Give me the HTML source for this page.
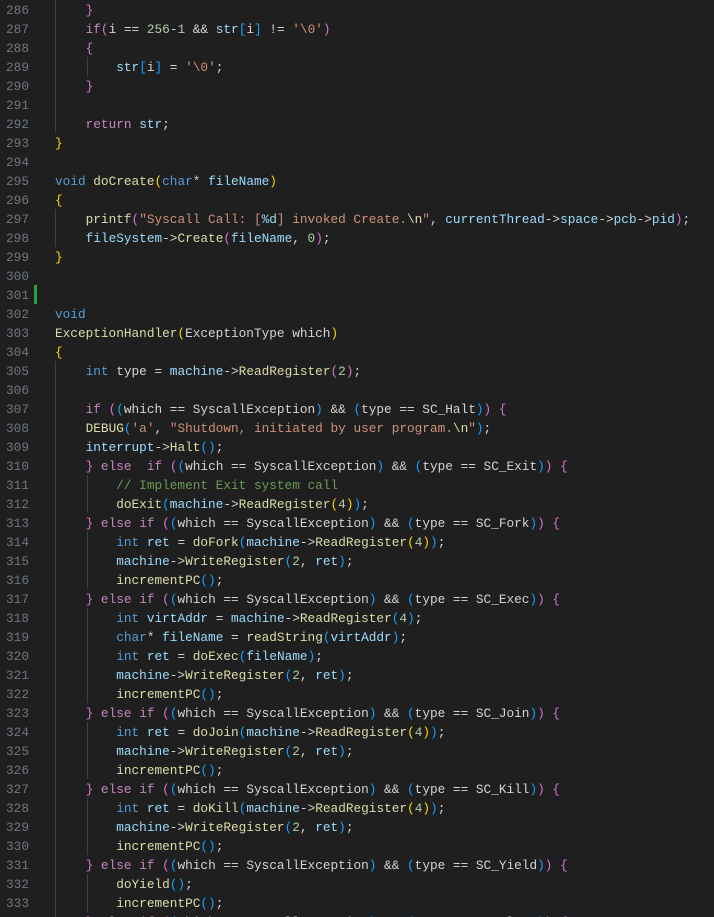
<!DOCTYPE html>
<html><head><meta charset="utf-8"><style>
html,body{margin:0;padding:0;background:#1f1f1f;width:714px;height:917px;overflow:hidden}
#w{position:relative;width:714px;height:917px;font-family:"Liberation Mono",monospace;font-size:12.75px;color:#d4d4d4}
.l{position:absolute;left:0;height:19px;line-height:19px;white-space:pre;width:714px}
.n{position:absolute;left:0;width:29px;text-align:right;color:#6e7681}
.c{position:absolute;left:55px}
.g{position:absolute;width:1px;height:19px;background:#404040}
.k{color:#c586c0}.t{color:#569cd6}.f{color:#dcdcaa}.v{color:#9cdcfe}.s{color:#ce9178}.u{color:#b5cea8}.m{color:#6a9955}
.y{color:#ffd700}.p{color:#da70d6}.b{color:#179fff}
</style></head><body><div id="w">
<div class="l" style="top:0.5px"><span class="n">286</span><span class="c">    <span class="p">}</span></span></div>
<div class="l" style="top:19.5px"><span class="n">287</span><span class="c">    <span class="k">if</span><span class="p">(</span>i == <span class="u">256</span>-<span class="u">1</span> &amp;&amp; <span class="v">str</span><span class="b">[</span>i<span class="b">]</span> != <span class="s">'\0'</span><span class="p">)</span></span></div>
<div class="l" style="top:38.5px"><span class="n">288</span><span class="c">    <span class="p">{</span></span></div>
<div class="l" style="top:57.5px"><span class="n">289</span><span class="c">        <span class="v">str</span><span class="b">[</span>i<span class="b">]</span> = <span class="s">'\0'</span>;</span></div>
<div class="l" style="top:76.5px"><span class="n">290</span><span class="c">    <span class="p">}</span></span></div>
<div class="l" style="top:95.5px"><span class="n">291</span></div>
<div class="l" style="top:114.5px"><span class="n">292</span><span class="c">    <span class="k">return</span> <span class="v">str</span>;</span></div>
<div class="l" style="top:133.5px"><span class="n">293</span><span class="c"><span class="y">}</span></span></div>
<div class="l" style="top:152.5px"><span class="n">294</span></div>
<div class="l" style="top:171.5px"><span class="n">295</span><span class="c"><span class="t">void</span> <span class="f">doCreate</span><span class="y">(</span><span class="t">char</span>* <span class="v">fileName</span><span class="y">)</span></span></div>
<div class="l" style="top:190.5px"><span class="n">296</span><span class="c"><span class="y">{</span></span></div>
<div class="l" style="top:209.5px"><span class="n">297</span><span class="c">    <span class="f">printf</span><span class="p">(</span><span class="s">"Syscall Call: [</span><span class="v">%d</span><span class="s">] invoked Create.</span><span class="f">\n</span><span class="s">"</span>, <span class="v">currentThread</span>-&gt;<span class="v">space</span>-&gt;<span class="v">pcb</span>-&gt;<span class="v">pid</span><span class="p">)</span>;</span></div>
<div class="l" style="top:228.5px"><span class="n">298</span><span class="c">    <span class="v">fileSystem</span>-&gt;<span class="f">Create</span><span class="p">(</span><span class="v">fileName</span>, <span class="u">0</span><span class="p">)</span>;</span></div>
<div class="l" style="top:247.5px"><span class="n">299</span><span class="c"><span class="y">}</span></span></div>
<div class="l" style="top:266.5px"><span class="n">300</span></div>
<div class="l" style="top:285.5px"><span class="n">301</span></div>
<div style="position:absolute;left:34px;top:285px;width:3px;height:19px;background:#2ea043"></div>
<div class="l" style="top:304.5px"><span class="n">302</span><span class="c"><span class="t">void</span></span></div>
<div class="l" style="top:323.5px"><span class="n">303</span><span class="c"><span class="f">ExceptionHandler</span><span class="y">(</span>ExceptionType which<span class="y">)</span></span></div>
<div class="l" style="top:342.5px"><span class="n">304</span><span class="c"><span class="y">{</span></span></div>
<div class="l" style="top:361.5px"><span class="n">305</span><span class="c">    <span class="t">int</span> type = <span class="v">machine</span>-&gt;<span class="f">ReadRegister</span><span class="p">(</span><span class="u">2</span><span class="p">)</span>;</span></div>
<div class="l" style="top:380.5px"><span class="n">306</span></div>
<div class="l" style="top:399.5px"><span class="n">307</span><span class="c">    <span class="k">if</span> <span class="p">(</span><span class="b">(</span>which == SyscallException<span class="b">)</span> &amp;&amp; <span class="b">(</span>type == SC_Halt<span class="b">)</span><span class="p">)</span> <span class="p">{</span></span></div>
<div class="l" style="top:418.5px"><span class="n">308</span><span class="c">    <span class="f">DEBUG</span><span class="b">(</span><span class="s">'a'</span>, <span class="s">"Shutdown, initiated by user program.</span><span class="f">\n</span><span class="s">"</span><span class="b">)</span>;</span></div>
<div class="l" style="top:437.5px"><span class="n">309</span><span class="c">    <span class="v">interrupt</span>-&gt;<span class="f">Halt</span><span class="b">()</span>;</span></div>
<div class="l" style="top:456.5px"><span class="n">310</span><span class="c">    <span class="p">}</span> <span class="k">else</span>  <span class="k">if</span> <span class="p">(</span><span class="b">(</span>which == SyscallException<span class="b">)</span> &amp;&amp; <span class="b">(</span>type == SC_Exit<span class="b">)</span><span class="p">)</span> <span class="p">{</span></span></div>
<div class="l" style="top:475.5px"><span class="n">311</span><span class="c">        <span class="m">// Implement Exit system call</span></span></div>
<div class="l" style="top:494.5px"><span class="n">312</span><span class="c">        <span class="f">doExit</span><span class="b">(</span><span class="v">machine</span>-&gt;<span class="f">ReadRegister</span><span class="y">(</span><span class="u">4</span><span class="y">)</span><span class="b">)</span>;</span></div>
<div class="l" style="top:513.5px"><span class="n">313</span><span class="c">    <span class="p">}</span> <span class="k">else</span> <span class="k">if</span> <span class="p">(</span><span class="b">(</span>which == SyscallException<span class="b">)</span> &amp;&amp; <span class="b">(</span>type == SC_Fork<span class="b">)</span><span class="p">)</span> <span class="p">{</span></span></div>
<div class="l" style="top:532.5px"><span class="n">314</span><span class="c">        <span class="t">int</span> <span class="v">ret</span> = <span class="f">doFork</span><span class="b">(</span><span class="v">machine</span>-&gt;<span class="f">ReadRegister</span><span class="y">(</span><span class="u">4</span><span class="y">)</span><span class="b">)</span>;</span></div>
<div class="l" style="top:551.5px"><span class="n">315</span><span class="c">        <span class="v">machine</span>-&gt;<span class="f">WriteRegister</span><span class="b">(</span><span class="u">2</span>, <span class="v">ret</span><span class="b">)</span>;</span></div>
<div class="l" style="top:570.5px"><span class="n">316</span><span class="c">        <span class="f">incrementPC</span><span class="b">()</span>;</span></div>
<div class="l" style="top:589.5px"><span class="n">317</span><span class="c">    <span class="p">}</span> <span class="k">else</span> <span class="k">if</span> <span class="p">(</span><span class="b">(</span>which == SyscallException<span class="b">)</span> &amp;&amp; <span class="b">(</span>type == SC_Exec<span class="b">)</span><span class="p">)</span> <span class="p">{</span></span></div>
<div class="l" style="top:608.5px"><span class="n">318</span><span class="c">        <span class="t">int</span> <span class="v">virtAddr</span> = <span class="v">machine</span>-&gt;<span class="f">ReadRegister</span><span class="b">(</span><span class="u">4</span><span class="b">)</span>;</span></div>
<div class="l" style="top:627.5px"><span class="n">319</span><span class="c">        <span class="t">char</span>* <span class="v">fileName</span> = <span class="f">readString</span><span class="b">(</span><span class="v">virtAddr</span><span class="b">)</span>;</span></div>
<div class="l" style="top:646.5px"><span class="n">320</span><span class="c">        <span class="t">int</span> <span class="v">ret</span> = <span class="f">doExec</span><span class="b">(</span><span class="v">fileName</span><span class="b">)</span>;</span></div>
<div class="l" style="top:665.5px"><span class="n">321</span><span class="c">        <span class="v">machine</span>-&gt;<span class="f">WriteRegister</span><span class="b">(</span><span class="u">2</span>, <span class="v">ret</span><span class="b">)</span>;</span></div>
<div class="l" style="top:684.5px"><span class="n">322</span><span class="c">        <span class="f">incrementPC</span><span class="b">()</span>;</span></div>
<div class="l" style="top:703.5px"><span class="n">323</span><span class="c">    <span class="p">}</span> <span class="k">else</span> <span class="k">if</span> <span class="p">(</span><span class="b">(</span>which == SyscallException<span class="b">)</span> &amp;&amp; <span class="b">(</span>type == SC_Join<span class="b">)</span><span class="p">)</span> <span class="p">{</span></span></div>
<div class="l" style="top:722.5px"><span class="n">324</span><span class="c">        <span class="t">int</span> <span class="v">ret</span> = <span class="f">doJoin</span><span class="b">(</span><span class="v">machine</span>-&gt;<span class="f">ReadRegister</span><span class="y">(</span><span class="u">4</span><span class="y">)</span><span class="b">)</span>;</span></div>
<div class="l" style="top:741.5px"><span class="n">325</span><span class="c">        <span class="v">machine</span>-&gt;<span class="f">WriteRegister</span><span class="b">(</span><span class="u">2</span>, <span class="v">ret</span><span class="b">)</span>;</span></div>
<div class="l" style="top:760.5px"><span class="n">326</span><span class="c">        <span class="f">incrementPC</span><span class="b">()</span>;</span></div>
<div class="l" style="top:779.5px"><span class="n">327</span><span class="c">    <span class="p">}</span> <span class="k">else</span> <span class="k">if</span> <span class="p">(</span><span class="b">(</span>which == SyscallException<span class="b">)</span> &amp;&amp; <span class="b">(</span>type == SC_Kill<span class="b">)</span><span class="p">)</span> <span class="p">{</span></span></div>
<div class="l" style="top:798.5px"><span class="n">328</span><span class="c">        <span class="t">int</span> <span class="v">ret</span> = <span class="f">doKill</span><span class="b">(</span><span class="v">machine</span>-&gt;<span class="f">ReadRegister</span><span class="y">(</span><span class="u">4</span><span class="y">)</span><span class="b">)</span>;</span></div>
<div class="l" style="top:817.5px"><span class="n">329</span><span class="c">        <span class="v">machine</span>-&gt;<span class="f">WriteRegister</span><span class="b">(</span><span class="u">2</span>, <span class="v">ret</span><span class="b">)</span>;</span></div>
<div class="l" style="top:836.5px"><span class="n">330</span><span class="c">        <span class="f">incrementPC</span><span class="b">()</span>;</span></div>
<div class="l" style="top:855.5px"><span class="n">331</span><span class="c">    <span class="p">}</span> <span class="k">else</span> <span class="k">if</span> <span class="p">(</span><span class="b">(</span>which == SyscallException<span class="b">)</span> &amp;&amp; <span class="b">(</span>type == SC_Yield<span class="b">)</span><span class="p">)</span> <span class="p">{</span></span></div>
<div class="l" style="top:874.5px"><span class="n">332</span><span class="c">        <span class="f">doYield</span><span class="b">()</span>;</span></div>
<div class="l" style="top:893.5px"><span class="n">333</span><span class="c">        <span class="f">incrementPC</span><span class="b">()</span>;</span></div>
<div class="l" style="top:912.5px"><span class="n">334</span><span class="c">    <span class="p">}</span> <span class="k">else</span> <span class="k">if</span> <span class="p">(</span><span class="b">(</span>which == SyscallException<span class="b">)</span> &amp;&amp; <span class="b">(</span>type == SC_Sleep<span class="b">)</span><span class="p">)</span> <span class="p">{</span></span></div>
<!-- indent guides -->
<div class="g" style="left:55px;top:0;height:133px"></div>
<div class="g" style="left:87px;top:57px"></div>
<div class="g" style="left:55px;top:209px;height:38px"></div>
<div class="g" style="left:55px;top:361px;height:556px"></div>
<div class="g" style="left:87px;top:475px;height:38px"></div>
<div class="g" style="left:87px;top:532px;height:57px"></div>
<div class="g" style="left:87px;top:608px;height:95px"></div>
<div class="g" style="left:87px;top:722px;height:57px"></div>
<div class="g" style="left:87px;top:798px;height:57px"></div>
<div class="g" style="left:87px;top:874px;height:38px"></div>
</div></body></html>
